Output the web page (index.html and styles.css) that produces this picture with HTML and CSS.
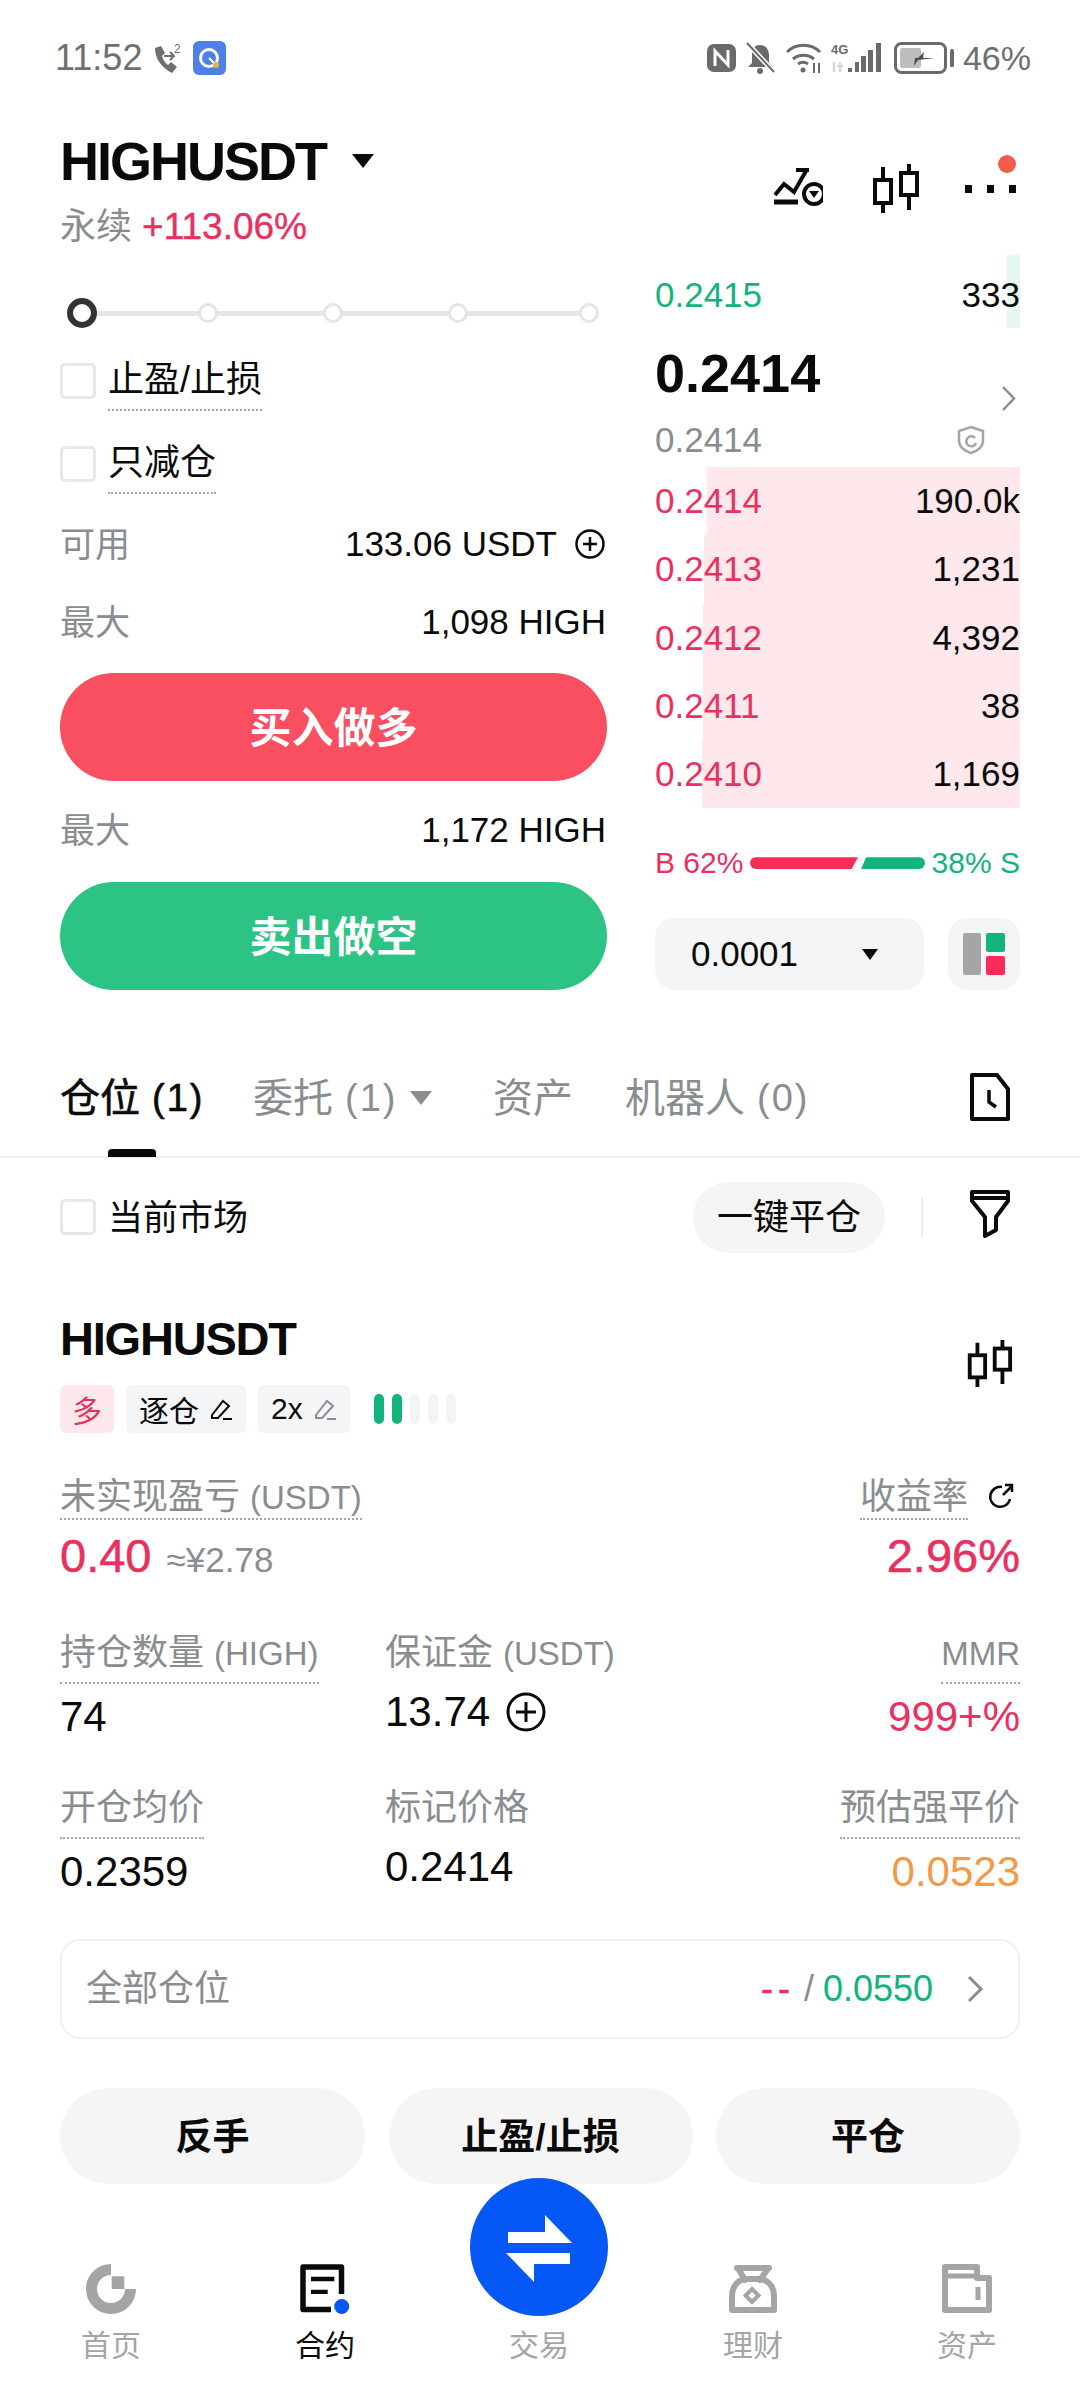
FILE: index.html
```html
<!DOCTYPE html>
<html lang="zh-CN">
<head>
    <meta charset="UTF-8">
    <meta name="viewport" content="width=device-width, initial-scale=1.0">
    <title>HIGHUSDT</title>
    <link rel="stylesheet" href="styles.css">
</head>
<body>
<div class="page">

    <!-- Status bar -->
    <div class="status-bar">
        <div class="status-side">
            <span class="status-time">11:52</span>
            <svg width="32" height="34" viewBox="0 0 32 34"><path d="M3 7c0 11 7 20 17 25l5-6-6-5-3 3c-3-2-5-6-6-9l3-3-4-7z" fill="#6f6f6f"/><path d="M12 15h9M18 11l4 4-4 4" stroke="#6f6f6f" stroke-width="2" fill="none"/><text x="22" y="12" class="status-mini">2</text></svg>
            <svg class="app-icon" width="33" height="34" viewBox="0 0 33 34"><rect width="33" height="34" rx="6" fill="#4f80e8"/><circle cx="16" cy="17" r="8.5" stroke="#fff" stroke-width="3" fill="none"/><path d="M16 17l6 6" stroke="#fff" stroke-width="2"/><circle cx="23" cy="24" r="3" fill="#e3b04b"/></svg>
        </div>
        <div class="status-side">
            <svg width="29" height="28" viewBox="0 0 29 28"><rect width="29" height="28" rx="7" fill="#6a6a6a"/><path d="M8 22V7l13 14V6" fill="none" stroke="#fff" stroke-width="3"/></svg>
            <svg class="gap-bell" width="29" height="32" viewBox="0 0 29 32"><path d="M14 3c-6 0-8 5-8 10v8l-4 4h25l-4-4v-8c0-5-3-10-9-10z" fill="#6a6a6a"/><circle cx="14" cy="29" r="3" fill="#6a6a6a"/><path d="M1 1l27 29" stroke="#fff" stroke-width="5"/><path d="M1 1l27 29" stroke="#6a6a6a" stroke-width="2"/></svg>
            <svg class="gap-wifi" width="37" height="30" viewBox="0 0 37 30"><g fill="none" stroke="#6a6a6a" stroke-width="3"><path d="M1 9c9-9 24-9 33 0"/><path d="M7 16c6-5 15-5 21 0"/></g><circle cx="17" cy="27" r="2.5" fill="#6a6a6a"/><path d="M12 21c3-2 7-2 10 0" fill="none" stroke="#6a6a6a" stroke-width="3"/><path d="M28 20v10M33 20v10" stroke="#6a6a6a" stroke-width="2"/></svg>
            <svg class="gap-net" width="52" height="32" viewBox="0 0 52 32"><text x="0" y="12" class="status-mini-b">4G</text><path d="M3 20v10M9 20v10M12 24h-6" stroke="#d8d8d8" stroke-width="2.5" fill="none"/><rect x="17" y="26" width="4" height="4" fill="#6a6a6a"/><rect x="24" y="20" width="4" height="10" fill="#6a6a6a"/><rect x="30" y="14" width="5" height="16" fill="#6a6a6a"/><rect x="37" y="8" width="5" height="22" fill="#6a6a6a"/><rect x="45" y="1" width="5" height="29" fill="#6a6a6a"/></svg>
            <svg class="gap-bat" width="60" height="32" viewBox="0 0 60 32"><rect x="1.5" y="1.5" width="50" height="29" rx="6" fill="none" stroke="#6a6a6a" stroke-width="3"/><rect x="6" y="6" width="21" height="20" rx="2" fill="#bdbdbd"/><path d="M12 16h12l6-6-1 6h12l-17 2-4 6 1-8z" fill="#4d4d4d"/><rect x="56" y="7" width="4" height="18" rx="1.5" fill="#6a6a6a"/></svg>
            <span class="status-battery">46%</span>
        </div>
    </div>

    <!-- Header -->
    <div class="header">
        <div>
            <div class="symbol-line">
                <span class="symbol">HIGHUSDT</span>
                <span class="caret caret-lg"></span>
            </div>
            <div class="sub-line"><span class="text-grey">永续</span> <span class="change text-red">+113.06%</span></div>
        </div>
        <div class="header-actions">
            <svg width="54" height="50" viewBox="0 0 54 50"><g fill="none" stroke="#0a0a0a" stroke-width="4"><path d="M6 34l9-11 10 8 12-21"/><path d="M27 9h13"/><circle cx="45" cy="33" r="10"/></g><path d="M5 41h24" stroke="#0a0a0a" stroke-width="5"/><path d="M40 30h10l-5 7z" fill="#0a0a0a"/></svg>
            <svg class="candles" width="52" height="52" viewBox="0 0 52 52"><g fill="none" stroke="#0a0a0a" stroke-width="4"><rect x="7" y="19" width="16" height="23"/><path d="M15 6v13M15 42v10"/><rect x="33" y="12" width="16" height="22"/><path d="M41 3v9M41 34v15"/></g></svg>
            <div class="more">
                <i></i><i></i><i></i>
                <span class="notify-dot"></span>
            </div>
        </div>
    </div>

    <!-- Order form + order book -->
    <div class="trade">
        <div class="order-form">
            <div class="slider">
                <span class="slider-line"></span>
                <span class="knob knob-on"></span>
                <span class="knob"></span>
                <span class="knob"></span>
                <span class="knob"></span>
                <span class="knob knob-last"></span>
            </div>
            <div class="check-row">
                <span class="checkbox"></span>
                <span class="dotted">止盈/止损</span>
            </div>
            <div class="check-row">
                <span class="checkbox"></span>
                <span class="dotted">只减仓</span>
            </div>
            <div class="info-row">
                <span class="text-grey">可用</span>
                <span class="info-value">133.06 USDT
                    <svg width="32" height="32" viewBox="0 0 32 32"><circle cx="16" cy="16" r="13.5" fill="none" stroke="#0a0a0a" stroke-width="2.5"/><path d="M16 9v14M9 16h14" stroke="#0a0a0a" stroke-width="2.5"/></svg>
                </span>
            </div>
            <div class="info-row">
                <span class="text-grey">最大</span>
                <span class="info-value">1,098 HIGH</span>
            </div>
            <div class="big-btn buy">买入做多</div>
            <div class="info-row info-row-sell">
                <span class="text-grey">最大</span>
                <span class="info-value">1,172 HIGH</span>
            </div>
            <div class="big-btn sell">卖出做空</div>
        </div>

        <div class="book">
            <div class="book-row book-top">
                <span class="bid-bar"></span>
                <span class="text-green">0.2415</span>
                <span>333</span>
            </div>
            <div class="last-price">
                <span class="last-big">0.2414</span>
                <svg width="16" height="27" viewBox="0 0 16 27"><path d="M2 2l11 11.5L2 25" fill="none" stroke="#8a8d8f" stroke-width="2.5"/></svg>
            </div>
            <div class="mark-price">
                <span class="text-grey">0.2414</span>
                <svg width="28" height="30" viewBox="0 0 28 30"><path d="M14 2l12 4v10c0 6-6 10-12 12C8 26 2 22 2 16V6z" fill="none" stroke="#a3a5a7" stroke-width="2.5"/><path d="M18 13a5 5 0 1 0 1 5" fill="none" stroke="#a3a5a7" stroke-width="2.5"/></svg>
            </div>
            <div class="book-row"><span class="ask-bar" style="width:313px"></span><span class="text-red">0.2414</span><span>190.0k</span></div>
            <div class="book-row"><span class="ask-bar" style="width:316px"></span><span class="text-red">0.2413</span><span>1,231</span></div>
            <div class="book-row"><span class="ask-bar" style="width:317px"></span><span class="text-red">0.2412</span><span>4,392</span></div>
            <div class="book-row"><span class="ask-bar" style="width:317px"></span><span class="text-red">0.2411</span><span>38</span></div>
            <div class="book-row"><span class="ask-bar" style="width:318px"></span><span class="text-red">0.2410</span><span>1,169</span></div>

            <div class="ratio">
                <span class="text-red">B 62%</span>
                <span class="ratio-bars">
                    <span class="ratio-buy"></span>
                    <span class="ratio-sell"></span>
                </span>
                <span class="text-green">38% S</span>
            </div>

            <div class="book-tools">
                <div class="precision">
                    <span>0.0001</span>
                    <span class="caret"></span>
                </div>
                <div class="layout-btn">
                    <svg width="42" height="42" viewBox="0 0 42 42"><rect x="0" y="0" width="18" height="42" rx="2" fill="#a3a5a7"/><rect x="23" y="0" width="19" height="19" rx="2" fill="#12b47c"/><rect x="23" y="23" width="19" height="19" rx="2" fill="#f72c58"/></svg>
                </div>
            </div>
        </div>
    </div>

    <!-- Tabs -->
    <div class="tabs">
        <span class="tab tab-on">仓位<small>(1)</small><i class="tab-line"></i></span>
        <span class="tab tab-orders">委托<small>(1)</small><span class="caret caret-grey"></span></span>
        <span class="tab tab-assets">资产</span>
        <span class="tab tab-bots">机器人<small>(0)</small></span>
        <svg class="tab-doc" width="40" height="48" viewBox="0 0 40 48"><path d="M2 2h25l11 14v30H2z" fill="none" stroke="#0a0a0a" stroke-width="4" stroke-linejoin="round"/><path d="M19 17v12l7 5" fill="none" stroke="#0a0a0a" stroke-width="3.5"/></svg>
    </div>

    <!-- Filter row -->
    <div class="filter-row">
        <span class="checkbox"></span>
        <span class="filter-label">当前市场</span>
        <span class="pill">一键平仓</span>
        <span class="filter-sep"></span>
        <svg class="filter-icon" width="40" height="48" viewBox="0 0 40 48"><path d="M2 2h36v9L26 27v13l-11 6V27L2 11z" fill="none" stroke="#0a0a0a" stroke-width="4" stroke-linejoin="round"/><path d="M3 8h34" stroke="#0a0a0a" stroke-width="4"/></svg>
    </div>

    <!-- Position card -->
    <div class="position">
        <div class="pos-title">
            <span class="pos-symbol">HIGHUSDT</span>
            <svg class="pos-candles" width="50" height="50" viewBox="0 0 52 52"><g fill="none" stroke="#0a0a0a" stroke-width="4"><rect x="7" y="19" width="16" height="23"/><path d="M15 6v13M15 42v10"/><rect x="33" y="12" width="16" height="22"/><path d="M41 3v9M41 34v15"/></g></svg>
        </div>
        <div class="tags">
            <span class="tag tag-long">多</span>
            <span class="tag">逐仓
                <svg width="24" height="24" viewBox="0 0 24 24"><path d="M3 18L14 4l6 5-11 12H3z" fill="none" stroke="#0a0a0a" stroke-width="2"/><path d="M14 22h9" stroke="#0a0a0a" stroke-width="2"/></svg>
            </span>
            <span class="tag">2x
                <svg width="24" height="24" viewBox="0 0 24 24"><path d="M3 18L14 4l6 5-11 12H3z" fill="none" stroke="#8a8d8f" stroke-width="2"/><path d="M14 22h9" stroke="#8a8d8f" stroke-width="2"/></svg>
            </span>
            <span class="risk">
                <i class="risk-on"></i><i class="risk-on"></i><i></i><i></i><i></i>
            </span>
        </div>

        <div class="metrics metrics-first">
            <div class="metric">
                <span class="label dotted-grey label-tight">未实现盈亏 <span class="unit">(USDT)</span></span>
                <span class="value-lg text-red">0.40 <small>≈¥2.78</small></span>
            </div>
            <div class="metric metric-right metric-end">
                <span class="label-wrap">
                    <span class="label dotted-grey label-tight">收益率</span>
                    <svg width="30" height="30" viewBox="0 0 30 30"><path d="M24 17a10 10 0 1 1-8-12" fill="none" stroke="#0a0a0a" stroke-width="2.5"/><path d="M17 13l9-9M19 3h7v7" fill="none" stroke="#0a0a0a" stroke-width="2.5"/></svg>
                </span>
                <span class="value-lg text-red">2.96%</span>
            </div>
        </div>

        <div class="metrics">
            <div class="metric">
                <span class="label dotted-grey">持仓数量 <span class="unit">(HIGH)</span></span>
                <span class="value">74</span>
            </div>
            <div class="metric">
                <span class="label">保证金 <span class="unit">(USDT)</span></span>
                <span class="value value-up">13.74
                    <svg width="40" height="40" viewBox="0 0 40 40"><circle cx="20" cy="20" r="18" fill="none" stroke="#0a0a0a" stroke-width="3"/><path d="M20 10v20M10 20h20" stroke="#0a0a0a" stroke-width="3"/></svg>
                </span>
            </div>
            <div class="metric metric-right">
                <span class="label dotted-grey"><span class="unit">MMR</span></span>
                <span class="value text-red">999+%</span>
            </div>
        </div>

        <div class="metrics">
            <div class="metric">
                <span class="label dotted-grey">开仓均价</span>
                <span class="value">0.2359</span>
            </div>
            <div class="metric">
                <span class="label">标记价格</span>
                <span class="value value-up">0.2414</span>
            </div>
            <div class="metric metric-right">
                <span class="label dotted-grey">预估强平价</span>
                <span class="value text-orange">0.0523</span>
            </div>
        </div>

        <div class="all-positions">
            <span class="all-label">全部仓位</span>
            <span class="all-right">
                <span class="dashes text-red">--</span><span class="text-grey">/</span><span class="text-green">0.0550</span>
                <svg width="18" height="30" viewBox="0 0 18 30"><path d="M3 3l12 12L3 27" fill="none" stroke="#8a8d8f" stroke-width="3"/></svg>
            </span>
        </div>

        <div class="actions">
            <span class="action">反手</span>
            <span class="action">止盈/止损</span>
            <span class="action">平仓</span>
        </div>
    </div>

    <!-- Bottom nav -->
    <div class="nav">
        <div class="nav-item">
            <svg width="50" height="50" viewBox="0 0 50 50"><path d="M25 5.5A19.5 19.5 0 1 0 44.5 25" fill="none" stroke="#a3a5a7" stroke-width="11"/><rect x="25.7" y="12.3" width="12.6" height="12.7" fill="#a3a5a7"/></svg>
            <span>首页</span>
        </div>
        <div class="nav-item nav-on">
            <svg width="50" height="50" viewBox="0 0 50 50"><path d="M31 45.5H3V3h38.500V30" fill="none" stroke="#0a0a0a" stroke-width="5.500" stroke-linejoin="round"/><path d="M11 12.700h23.300v4.600H11zM11 25.700h16.700V30H11z" fill="#0a0a0a"/><circle cx="41.700" cy="42.500" r="7.500" fill="#0558f5"/></svg>
            <span>合约</span>
        </div>
        <div class="nav-item">
            <span class="nav-slot"></span>
            <span>交易</span>
        </div>
        <div class="nav-item">
            <svg width="48" height="50" viewBox="0 0 48 50"><path d="M10 6l6 10M38 6l-7 10M8 4h32" fill="none" stroke="#a3a5a7" stroke-width="6" stroke-linecap="round"/><path d="M3 46V32c0-10 7-17 14-17h13c8 0 15 7 15 17v14z" fill="none" stroke="#a3a5a7" stroke-width="6" stroke-linejoin="round"/><path d="M23 25l6.500 6.500-6.500 6.500-6.500-6.500z" fill="none" stroke="#a3a5a7" stroke-width="4"/></svg>
            <span>理财</span>
        </div>
        <div class="nav-item">
            <svg width="50" height="50" viewBox="0 0 50 50"><path d="M3 3h32v11h12v32H3z" fill="none" stroke="#a3a5a7" stroke-width="6" stroke-linejoin="round"/><path d="M3 12h32" stroke="#a3a5a7" stroke-width="5"/><rect x="33.500" y="23" width="5" height="13" fill="#a3a5a7"/></svg>
            <span>资产</span>
        </div>
    </div>

    <!-- Trade button floats over the nav -->
    <div class="fab">
        <svg width="138" height="138" viewBox="0 0 138 138"><path d="M38 54h37V37l27 28H38zM36 75h64v11H64v18z" fill="#fff"/></svg>
    </div>
</div>
</body>
</html>
```

FILE: styles.css
```css
* {
    box-sizing: border-box;
}
body {
    margin: 0;
    padding: 0;
    background: #fff;
    font-family: "Liberation Sans", "Noto Sans CJK SC", sans-serif;
    color: #0a0a0a;
}
svg {
    display: block;
    flex: none;
}
.page {
    position: relative;
    width: 1080px;
    height: 2388px;
    overflow: hidden;
}

.text-grey { color: #8a8d8f; }
.text-red { color: #e9305e; }
.text-green { color: #12b47c; }
.text-orange { color: #f2994a; }

/* status bar */
.status-bar {
    height: 116px;
    padding: 0 49px 0 55px;
    display: flex;
    justify-content: space-between;
    align-items: center;
    color: #6f6f6f;
}
.status-side {
    display: flex;
    align-items: center;
}
.status-time {
    font-size: 36px;
    margin-right: 10px;
}
.status-mini {
    font-size: 12px;
    fill: #6f6f6f;
}
.status-mini-b {
    font-size: 13px;
    font-weight: 700;
    fill: #6a6a6a;
}
.app-icon { margin-left: 9px; }
.gap-bell { margin-left: 10px; }
.gap-wifi { margin-left: 11px; }
.gap-net { margin-left: 8px; }
.gap-bat { margin-left: 11px; }
.status-battery {
    font-size: 34px;
    margin-left: 9px;
}

/* header */
.header {
    height: 139px;
    padding: 0 64px 0 60px;
    display: flex;
    justify-content: space-between;
}
.symbol-line {
    height: 90px;
    display: flex;
    align-items: center;
}
.symbol {
    font-size: 54px;
    font-weight: 700;
    letter-spacing: -2px;
}
.sub-line {
    font-size: 36px;
    line-height: 42px;
}
.change {
    font-size: 37px;
    -webkit-text-stroke: 0.4px #e9305e;
}
.caret {
    width: 0;
    height: 0;
    border-left: 8px solid transparent;
    border-right: 8px solid transparent;
    border-top: 11px solid #0a0a0a;
}
.caret-lg {
    margin-left: 26px;
    border-left-width: 11px;
    border-right-width: 11px;
    border-top-width: 14px;
}
.header-actions {
    display: flex;
    align-items: flex-start;
    padding-top: 45px;
}
.candles { margin-left: 45px; }
.more {
    position: relative;
    width: 51px;
    height: 52px;
    margin-left: 45px;
    display: flex;
    justify-content: space-between;
    padding-top: 24px;
}
.more i {
    width: 7px;
    height: 8px;
    background: #0a0a0a;
}
.notify-dot {
    position: absolute;
    top: -6px;
    right: 0;
    width: 18px;
    height: 18px;
    border-radius: 50%;
    background: #f25c4d;
}

/* order form and book */
.trade {
    height: 735px;
    padding: 0 60px;
    display: grid;
    grid-template-columns: 547px 365px;
    column-gap: 48px;
}
.slider {
    position: relative;
    height: 84px;
    padding: 32px 8px 0 7px;
    display: flex;
    align-items: center;
    gap: 105px;
}
.slider-line {
    position: absolute;
    left: 20px;
    right: 16px;
    top: 56px;
    height: 5px;
    background: #e3e5e6;
}
.knob {
    position: relative;
    width: 20px;
    height: 20px;
    border: 3px solid #e3e5e6;
    border-radius: 50%;
    background: #fff;
}
.slider .slider-line + .knob {
    margin-left: 0;
}
.knob-on {
    width: 30px;
    height: 30px;
    border: 6px solid #333;
    margin-right: -4px;
}
.knob-last {
    margin-left: auto;
}
.check-row {
    height: 83px;
    display: flex;
    align-items: center;
    font-size: 36px;
}
.checkbox {
    width: 36px;
    height: 36px;
    border: 3px solid #e8e8e8;
    border-radius: 5px;
    margin-right: 12px;
    flex: none;
}
.dotted {
    line-height: 44px;
    padding-bottom: 7px;
    border-bottom: 2px dotted #a3a5a7;
    margin-top: 8px;
}
.info-row {
    height: 78px;
    display: flex;
    justify-content: space-between;
    align-items: center;
    font-size: 35px;
}
.info-row .text-grey {
    padding-bottom: 6px;
}
.info-row-sell {
    margin-top: 10px;
}
.info-value {
    display: flex;
    align-items: center;
    gap: 17px;
    font-size: 35px;
    padding-right: 1px;
}
.big-btn {
    height: 108px;
    padding-bottom: 5px;
    border-radius: 54px;
    display: flex;
    align-items: center;
    justify-content: center;
    color: #fff;
    font-size: 42px;
    font-weight: 700;
}
.buy {
    background: #f94f61;
    margin-top: 12px;
}
.sell {
    background: #2cc385;
    margin-top: 13px;
}

.book-row {
    position: relative;
    height: 68.2px;
    display: flex;
    justify-content: space-between;
    align-items: center;
    font-size: 35px;
}
.book-row span:not(.ask-bar):not(.bid-bar) {
    position: relative;
}
.book-top {
    margin-top: 6px;
}
.ask-bar {
    position: absolute;
    top: 0;
    right: 0;
    bottom: 0;
    background: #fee8ec;
}
.bid-bar {
    position: absolute;
    top: -6px;
    right: 0;
    width: 13px;
    height: 73px;
    background: #e6f7f1;
}
.last-price {
    height: 80px;
    display: flex;
    justify-content: space-between;
    align-items: flex-start;
    padding-right: 3px;
}
.last-big {
    font-size: 54px;
    font-weight: 700;
    line-height: 70px;
    margin-top: 9px;
}
.last-price svg {
    margin-top: 56px;
}
.mark-price {
    height: 58px;
    display: flex;
    justify-content: space-between;
    align-items: center;
    font-size: 35px;
    padding-right: 35px;
    padding-top: 4px;
}
.ratio {
    height: 110px;
    display: flex;
    align-items: center;
    justify-content: space-between;
    font-size: 30px;
}
.ratio-bars {
    display: flex;
    gap: 3px;
}
.ratio-buy,
.ratio-sell {
    display: block;
    height: 12px;
}
.ratio-buy {
    width: 108px;
    background: #f72c58;
    border-radius: 6px 0 0 6px;
    clip-path: polygon(0 0, 100% 0, 94% 100%, 0 100%);
}
.ratio-sell {
    width: 64px;
    background: #12b47c;
    border-radius: 0 6px 6px 0;
    clip-path: polygon(8% 0, 100% 0, 100% 100%, 0 100%);
}
.book-tools {
    display: flex;
    justify-content: space-between;
}
.precision {
    width: 269px;
    height: 72px;
    padding: 0 46px 0 36px;
    border-radius: 20px;
    background: #f4f5f6;
    display: flex;
    justify-content: space-between;
    align-items: center;
    font-size: 35px;
}
.layout-btn {
    width: 72px;
    height: 72px;
    border-radius: 20px;
    background: #f4f5f6;
    display: flex;
    align-items: center;
    justify-content: center;
}

/* tabs */
.tabs {
    position: relative;
    height: 168px;
    padding: 78px 70px 0 60px;
    border-bottom: 2px solid #f0f0f0;
    display: flex;
    align-items: flex-start;
    font-size: 40px;
    line-height: 60px;
    color: #8a8d8f;
}
.tab {
    display: flex;
    align-items: center;
}
.tab small {
    width: 52px;
    margin-left: 12px;
    font-size: 38px;
    font-weight: 400;
    letter-spacing: 2px;
}
.tab-on {
    color: #0a0a0a;
    -webkit-text-stroke: 0.6px #0a0a0a;
}
.tab-line {
    position: absolute;
    left: 108px;
    bottom: -1px;
    width: 48px;
    height: 8px;
    border-radius: 4px 4px 0 0;
    background: #0a0a0a;
}
.tab-orders { margin-left: 49px; }
.tab-assets { margin-left: 61px; }
.tab-bots { margin-left: 52px; }
.caret-grey {
    margin-left: 13px;
    border-left-width: 11px;
    border-right-width: 11px;
    border-top: 14px solid #8a8d8f;
}
.tab-doc {
    margin-left: auto;
    margin-top: 5px;
}

/* filter row */
.filter-row {
    height: 118px;
    padding: 0 70px 0 60px;
    display: flex;
    align-items: center;
}
.filter-label {
    font-size: 35px;
    padding-bottom: 6px;
}
.filter-icon {
    margin-top: -6px;
}
.pill {
    width: 192px;
    height: 71px;
    padding-bottom: 6px;
    margin-left: auto;
    border-radius: 36px;
    background: #f5f5f5;
    display: flex;
    align-items: center;
    justify-content: center;
    font-size: 36px;
}
.filter-sep {
    width: 2px;
    height: 40px;
    margin: 0 47px 0 36px;
    background: #eee;
}

/* position */
.position {
    padding: 31px 60px 0;
}
.pos-title {
    height: 62px;
    padding-right: 7px;
    display: flex;
    justify-content: space-between;
    align-items: center;
}
.pos-symbol {
    font-size: 47px;
    font-weight: 700;
    letter-spacing: -1.2px;
}
.pos-candles {
    align-self: flex-start;
    margin-top: 30px;
}
.tags {
    margin-top: 16px;
    height: 48px;
    display: flex;
    align-items: center;
    gap: 12px;
}
.tag {
    height: 48px;
    padding: 0 13px;
    border-radius: 6px;
    background: #f4f5f6;
    display: flex;
    align-items: center;
    gap: 10px;
    font-size: 30px;
}
.tag-long {
    width: 54px;
    justify-content: center;
    padding: 0;
    background: #fee8ec;
    color: #e9305e;
}
.risk {
    display: flex;
    gap: 8px;
    margin-left: 12px;
}
.risk i {
    width: 10px;
    height: 30px;
    border-radius: 5px;
    background: #f2f4f5;
}
.risk .risk-on {
    background: #12b47c;
}
.metrics {
    display: grid;
    grid-template-columns: 325px 1fr auto;
    margin-top: 41px;
}
.metrics-first {
    margin-top: 42px;
    grid-template-columns: 1fr auto;
    margin-bottom: 43px;
}
.metrics-first + .metrics {
    margin-top: 0;
}
.metric {
    display: flex;
    flex-direction: column;
    align-items: flex-start;
}
.metric-right {
    align-items: flex-end;
}
.label {
    font-size: 36px;
    line-height: 44px;
    height: 53px;
    color: #8a8d8f;
}
.unit {
    font-size: 33px;
}
.label.dotted-grey {
    border-bottom: 2px dotted #a3a5a7;
}
.label.label-tight {
    height: 45px;
}
.label-wrap {
    display: flex;
    gap: 18px;
    padding-right: 4px;
}
.label-wrap svg { margin-top: 7px; }
.value-lg {
    font-size: 47px;
    line-height: 56px;
    margin-top: 8px;
    -webkit-text-stroke: 0.5px #e9305e;
}
.value-lg small {
    font-size: 35px;
    color: #8a8d8f;
    margin-left: 2px;
    -webkit-text-stroke: 0;
}
.value {
    font-size: 42px;
    line-height: 56px;
    margin-top: 5px;
    display: flex;
    align-items: center;
    gap: 16px;
}
.value-up {
    margin-top: 0;
}
.all-positions {
    height: 100px;
    margin-top: 39px;
    padding: 0 34px 0 24px;
    border: 2px solid #f0f0f0;
    border-radius: 20px;
    display: flex;
    justify-content: space-between;
    align-items: center;
    font-size: 36px;
}
.all-label {
    color: #8a8d8f;
    padding-bottom: 9px;
}
.all-right {
    display: flex;
    align-items: center;
    gap: 9px;
}
.dashes {
    letter-spacing: 5px;
    -webkit-text-stroke: 0.5px #e9305e;
}
.all-right svg {
    margin-left: 24px;
}
.actions {
    margin-top: 49px;
    display: grid;
    grid-template-columns: 305px 304px 304px;
    column-gap: 23.5px;
}
.action {
    height: 96px;
    padding-bottom: 4px;
    border-radius: 48px;
    background: #f5f5f5;
    display: flex;
    align-items: center;
    justify-content: center;
    font-size: 37px;
    font-weight: 700;
}

/* bottom nav */
.nav {
    padding: 80px 4px 0;
    display: grid;
    grid-template-columns: repeat(5, 214px);
}
.nav-item {
    display: flex;
    flex-direction: column;
    align-items: center;
    font-size: 30px;
    line-height: 40px;
    color: #a3a5a7;
}
.nav-item svg,
.nav-slot {
    height: 50px;
    margin-bottom: 12px;
}
.nav-slot {
    display: block;
}
.nav-on {
    color: #0a0a0a;
}
.fab {
    position: absolute;
    left: 470px;
    top: 2178px;
    width: 138px;
    height: 138px;
    border-radius: 50%;
    background: #0558f5;
}
```
